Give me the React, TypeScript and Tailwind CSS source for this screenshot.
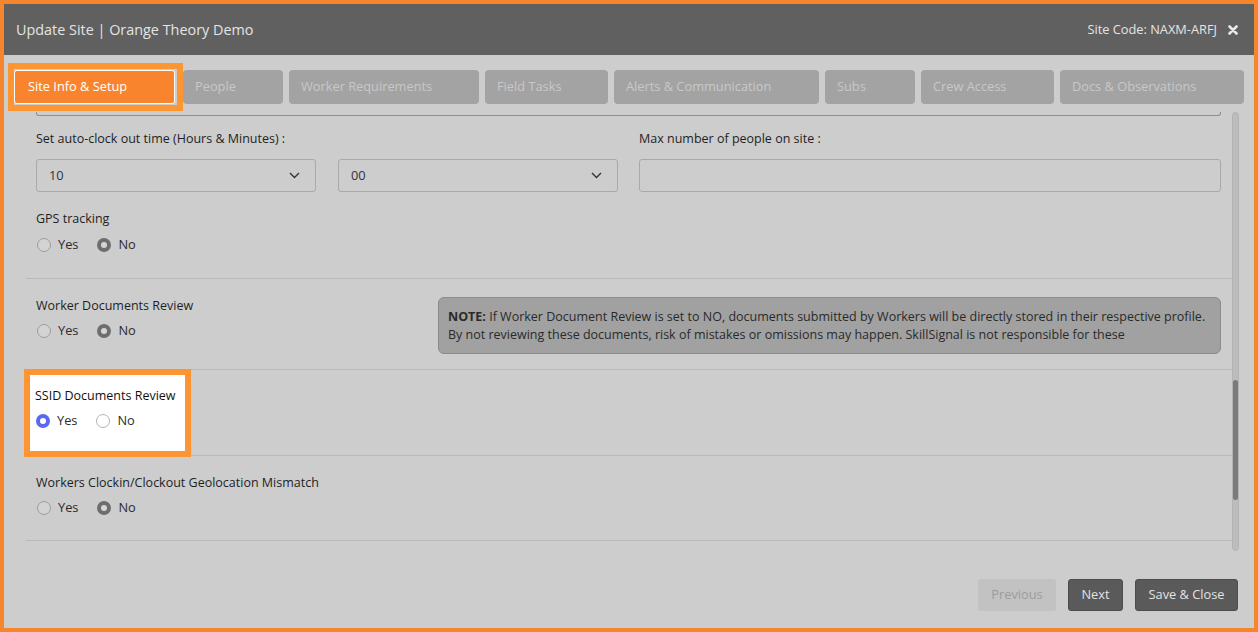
import React from 'react'

const tabs = [
  { label: 'People', w: 'w-[100px]' },
  { label: 'Worker Requirements', w: 'w-[190px]' },
  { label: 'Field Tasks', w: 'w-[123px]' },
  { label: 'Alerts & Communication', w: 'w-[205px]' },
  { label: 'Subs', w: 'w-[90px]' },
  { label: 'Crew Access', w: 'w-[133px]' },
  { label: 'Docs & Observations', w: 'w-[184px]' },
]

type RadioState = 'off' | 'gray' | 'blue' | 'offWhite'

function Radio({ state }: { state: RadioState }) {
  if (state === 'gray') {
    return <span className="w-[14px] h-[14px] rounded-full border-[4px] border-[#6e6e6e] bg-[#d6d6d6] shrink-0" />
  }
  if (state === 'blue') {
    return <span className="w-[14px] h-[14px] rounded-full border-[4px] border-[#5a69f4] bg-white shrink-0" />
  }
  if (state === 'offWhite') {
    return <span className="w-[14px] h-[14px] rounded-full border border-[#b4b4b4] bg-white shrink-0" />
  }
  return <span className="w-[14px] h-[14px] rounded-full border border-[#9e9e9e] bg-[#d3d3d3] shrink-0" />
}

function YesNo({ yes, no }: { yes: RadioState; no: RadioState }) {
  return (
    <div className="flex items-center gap-[19px] h-[18px] pl-px text-[12.8px] text-[#2b2b2b]">
      <label className="flex items-center gap-[7px]">
        <Radio state={yes} />
        <span>Yes</span>
      </label>
      <label className="flex items-center gap-[7px]">
        <Radio state={no} />
        <span>No</span>
      </label>
    </div>
  )
}

function Chevron() {
  return (
    <svg width="11" height="7" viewBox="0 0 11 7" fill="none">
      <path d="M1 1l4.5 4.5L10 1" stroke="#333" strokeWidth="1.4" />
    </svg>
  )
}

function SelectBox({ value }: { value: string }) {
  return (
    <div className="flex items-center justify-between w-[280px] h-[33px] rounded-[3px] border border-[#a9a9a9] pl-[12px] pr-[15px] text-[12.8px] text-[#333]">
      <span>{value}</span>
      <Chevron />
    </div>
  )
}

export default function App() {
  return (
    <div
      className="w-[1258px] h-[632px] border-4 border-[#f5862e] bg-[#cdcdcd] flex flex-col overflow-hidden"
      style={{ fontFamily: '"Open Sans", "Noto Sans", sans-serif' }}
    >
      {/* Header */}
      <div className="h-[51px] shrink-0 bg-[#606060] flex items-center justify-between pl-[12px] pr-[16px]">
        <span className="text-[14.4px] text-[#e4e4e4]">Update Site | Orange Theory Demo</span>
        <div className="flex items-center gap-[11px]">
          <span className="text-[12.8px] text-[#e4e4e4]">Site Code: NAXM-ARFJ</span>
          <svg width="10" height="10" viewBox="0 0 10 10">
            <path d="M1.5 1.5l7 7M8.5 1.5l-7 7" stroke="#e8e8e8" strokeWidth="2.6" strokeLinecap="round" />
          </svg>
        </div>
      </div>

      {/* Tabs */}
      <div className="flex pl-[10px] pt-[15px] gap-[6px]">
        <div className="relative w-[161px] h-[34px] mr-[2px] shrink-0">
          <div className="absolute -left-[6px] -top-[7px] -right-[8px] -bottom-[7px] border-[6px] border-[#fd9532]" />
          <div className="relative h-full rounded-[3px] border-[1.5px] border-white bg-[#f8852e] flex items-center pl-[13px] text-[12.8px] text-white">
            Site Info &amp; Setup
          </div>
        </div>
        {tabs.map((t) => (
          <div
            key={t.label}
            className={`${t.w} h-[34px] shrink-0 rounded-[4px] bg-[#a3a3a3] flex items-center pl-[12px] text-[12.8px] text-[#c8c8c8]`}
          >
            {t.label}
          </div>
        ))}
      </div>

      {/* Scroll area */}
      <div className="flex mt-[8px] ml-[22px] w-[1213px] h-[439px] shrink-0">
        <div className="flex-1 flex flex-col text-[12.5px] text-[#1f1f1f]">
          {/* Section 1 */}
          <div className="px-[10px] pr-[11px] pb-[24px]">
            <div className="h-[4px] border-x border-b border-[#8e8e8e] rounded-b-[3px]" />
            <div className="grid grid-cols-2 gap-x-[21px] mt-[14px]">
              <div>
                <div className="h-[18px] leading-[18px]">Set auto-clock out time (Hours &amp; Minutes) :</div>
                <div className="flex gap-[22px] mt-[11px]">
                  <SelectBox value="10" />
                  <SelectBox value="00" />
                </div>
              </div>
              <div>
                <div className="h-[18px] leading-[18px]">Max number of people on site :</div>
                <div className="h-[33px] mt-[11px] rounded-[3px] border border-[#a9a9a9]" />
              </div>
            </div>
            <div className="h-[18px] leading-[18px] mt-[18px]">GPS tracking</div>
            <div className="mt-[8px]">
              <YesNo yes="off" no="gray" />
            </div>
          </div>
          <div className="h-px bg-[#b9b9b9]" />

          {/* Section 2 */}
          <div className="flex pl-[10px] pr-[11px] h-[90px]">
            <div className="pt-[18px]">
              <div className="h-[18px] leading-[18px]">Worker Documents Review</div>
              <div className="mt-[7px]">
                <YesNo yes="off" no="gray" />
              </div>
            </div>
            <div className="ml-auto mt-[18px] w-[783px] h-[57px] rounded-[6px] border border-[#8b8b8b] bg-[#a1a1a1] px-[9px] pt-[10px] text-[12.5px] leading-[18px] text-[#2a2a2a] whitespace-nowrap overflow-hidden">
              <b className="font-bold">NOTE:</b> If Worker Document Review is set to NO, documents submitted by Workers will be directly stored in their respective profile.
              <br />
              By not reviewing these documents, risk of mistakes or omissions may happen. SkillSignal is not responsible for these
            </div>
          </div>
          <div className="h-px bg-[#b9b9b9]" />

          {/* Section 3 */}
          <div className="h-[85px]">
            <div className="relative z-10 -ml-[2px] -mt-[1px] w-[167px] h-[88px] border-[6px] border-[#fd9532] bg-white pl-[5px] pt-[12px] text-[#111]">
              <div className="h-[18px] leading-[18px]">SSID Documents Review</div>
              <div className="mt-[7px]">
                <YesNo yes="blue" no="offWhite" />
              </div>
            </div>
          </div>
          <div className="h-px bg-[#b9b9b9]" />

          {/* Section 4 */}
          <div className="pl-[10px] pt-[18px] h-[84px]">
            <div className="h-[18px] leading-[18px]">Workers Clockin/Clockout Geolocation Mismatch</div>
            <div className="mt-[7px]">
              <YesNo yes="off" no="gray" />
            </div>
          </div>
          <div className="h-px bg-[#b9b9b9]" />
        </div>

        {/* Scrollbar */}
        <div className="w-[7px] h-full rounded-full bg-[#bcbcbc] border border-[#b3b3b3] flex flex-col">
          <div className="h-[267px] shrink-0" />
          <div className="h-[120px] rounded-full bg-[#7a7a7a]" />
        </div>
      </div>

      {/* Footer */}
      <div className="flex justify-end gap-[12px] pr-[16px] mt-[28px]">
        <button className="w-[78px] h-[32px] rounded-[3px] bg-[#c2c2c2] text-[12.8px] text-[#9c9c9c]">Previous</button>
        <button className="w-[55px] h-[32px] rounded-[3px] bg-[#5a5a5a] border border-[#4c4c4c] text-[12.8px] text-[#e2e2e2]">Next</button>
        <button className="w-[103px] h-[32px] rounded-[3px] bg-[#5a5a5a] border border-[#4c4c4c] text-[12.8px] text-[#e2e2e2]">Save &amp; Close</button>
      </div>
    </div>
  )
}
